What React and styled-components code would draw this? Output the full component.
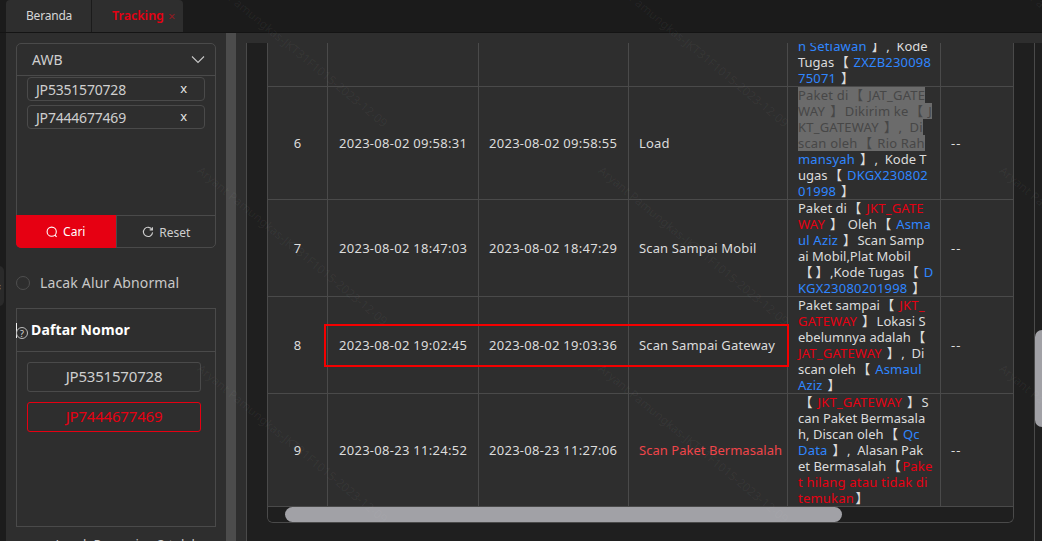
import React from "react";
import styled, { createGlobalStyle } from "styled-components";

const Global = createGlobalStyle`
  html, body { margin: 0; padding: 0; background: #1f1f1f; overflow: hidden; }
  * { box-sizing: border-box; }
  #root { height: 100vh; }
`;

const FONT = `"Noto Sans", "Noto Sans CJK SC", sans-serif`;
const LINE = "#4a4a4a";
const PANEL = "#2e2e2e";
const DARK = "#1f1f1f";
const RED = "#e60012";
const BLUE = "#2f86ff";
const TEXT = "#dcdcdc";

const Page = styled.div`
  position: relative;
  height: 100vh;
  display: flex;
  flex-direction: column;
  overflow: hidden;
  font-family: ${FONT};
  font-size: 13px;
  color: ${TEXT};
  background: ${DARK};
`;

const TabBar = styled.div`
  height: 33px;
  flex: none;
  display: flex;
  gap: 1px;
  padding-left: 6px;
  background: #1b1b1b;
  border-bottom: 1px solid #141414;
`;

const Tab = styled.div`
  width: ${(p) => p.$width}px;
  height: 32px;
  display: flex;
  align-items: center;
  padding: 0 0 1px 20px;
  gap: 5px;
  font-size: ${(p) => (p.$active ? "12.5px" : "12px")};
  letter-spacing: ${(p) => (p.$active ? "0" : "-0.2px")};
  background: ${PANEL};
  color: ${(p) => (p.$active ? RED : "#d6d6d6")};
  font-weight: ${(p) => (p.$active ? 600 : 400)};
  border-top-right-radius: ${(p) => (p.$active ? "4px" : "0")};
  border-top-left-radius: ${(p) => (p.$active ? "0" : "4px")};
`;

const TabClose = styled.span`
  margin-left: -1px;
  font-size: 13px;
  font-weight: 400;
  color: #8f1a22;
`;

const Body = styled.div`
  flex: 1;
  min-height: 0;
  display: flex;
`;

const EdgeStrip = styled.div`
  position: relative;
  width: 6px;
  flex: none;
  background: #1c1c1c;
`;

const EdgeHandle = styled.div`
  position: absolute;
  left: -2px;
  top: 233px;
  width: 6px;
  height: 40px;
  overflow: hidden;
  background: #2a2a2a;
  border-radius: 0 5px 5px 0;
  color: #888;
  font-size: 10px;
  line-height: 40px;
`;

const Sidebar = styled.aside`
  width: 220px;
  flex: none;
  padding: 10px 10px 0;
  background: ${PANEL};
  overflow: hidden;
`;

const SideScroll = styled.div`
  width: 10px;
  flex: none;
  background: #4c4c4c;
`;

const SearchBox = styled.div`
  height: 205px;
  display: flex;
  flex-direction: column;
  border: 1px solid ${LINE};
  border-radius: 5px;
`;

const SelectRow = styled.div`
  height: 32px;
  flex: none;
  display: flex;
  align-items: center;
  justify-content: space-between;
  padding: 0 10px 0 15px;
  border-bottom: 1px solid ${LINE};
  font-size: 14px;
  color: #cfcfcf;
`;

const ChipList = styled.div`
  flex: 1;
  display: flex;
  flex-direction: column;
  gap: 4px;
  padding: 1px 10px 0;
`;

const Chip = styled.div`
  width: 178px;
  height: 24px;
  display: flex;
  align-items: center;
  justify-content: space-between;
  padding: 0 17px 0 8px;
  border: 1px solid ${LINE};
  border-radius: 4px;
  font-size: 14px;
  letter-spacing: -0.2px;
  color: #cfcfcf;
`;

const ChipX = styled.span`
  font-size: 13px;
  color: #e4e4e4;
  margin-top: -3px;
`;

const ActionRow = styled.div`
  height: 33px;
  flex: none;
  display: flex;
  margin: 0 -1px -1px;
  border-top: 1px solid ${LINE};
`;

const ActionButton = styled.div`
  flex: 1;
  display: flex;
  align-items: center;
  justify-content: center;
  gap: 5px;
  font-size: 12px;
  color: ${(p) => (p.$primary ? "#fff" : "#cfcfcf")};
  background: ${(p) => (p.$primary ? RED : "transparent")};
  border-radius: ${(p) => (p.$primary ? "0 0 0 5px" : "0")};
  margin-top: ${(p) => (p.$primary ? "-1px" : "0")};
  border-left: ${(p) => (p.$primary ? "none" : `1px solid ${LINE}`)};
`;

const RadioRow = styled.div`
  display: flex;
  align-items: center;
  gap: 10px;
  height: 16px;
  margin-top: 27px;
  font-size: 14px;
  letter-spacing: 0.15px;
  color: #c8c8c8;
`;

const RadioLabel = styled.span`
  padding-bottom: 2px;
`;

const RadioDot = styled.span`
  width: 14px;
  height: 14px;
  border: 1px solid #4f4f4f;
  border-radius: 50%;
`;

const ListBox = styled.div`
  height: 219px;
  margin-top: 17px;
  border: 1px solid ${LINE};
`;

const ListHead = styled.div`
  position: relative;
  height: 43px;
  display: flex;
  align-items: center;
  padding: 0 0 2px 14px;
  font-size: 14px;
  letter-spacing: 0.15px;
  font-weight: 700;
  color: #fff;
  border-bottom: 1px solid ${LINE};
`;

const HelpBadge = styled.span`
  position: absolute;
  left: -1px;
  top: 18px;
  width: 12px;
  height: 12px;
  display: flex;
  align-items: center;
  justify-content: center;
  border: 1px solid #bbb;
  border-radius: 50%;
  font-size: 9px;
  font-weight: 400;
  color: #ddd;
`;

const HelpBar = styled.span`
  position: absolute;
  left: -1px;
  top: 14px;
  width: 1px;
  height: 15px;
  background: #f0f0f0;
`;

const ListBody = styled.div`
  display: flex;
  flex-direction: column;
  gap: 10px;
  padding: 10px 14px 0 10px;
`;

const NumberButton = styled.div`
  height: 30px;
  display: flex;
  align-items: center;
  justify-content: center;
  padding-bottom: 2px;
  font-size: 15px;
  letter-spacing: -0.2px;
  border-radius: 3px;
  color: ${(p) => (p.$active ? RED : "#cfcfcf")};
  border: 1px solid ${(p) => (p.$active ? RED : LINE)};
`;

const FootText = styled.div`
  margin-top: 8px;
  text-align: center;
  padding-left: 22px;
  font-size: 13px;
  color: #c8c8c8;
  white-space: nowrap;
`;

const Main = styled.main`
  flex: 1;
  min-width: 0;
  display: flex;
  padding-top: 10px;
  background: ${PANEL};
`;

const Content = styled.section`
  margin-left: 10px;
  width: 789px;
  flex: none;
  padding-left: 20px;
  background: ${DARK};
  border-left: 1px solid ${LINE};
  border-right: 1px solid ${LINE};
`;

const Card = styled.div`
  width: 747px;
  height: 480px;
  display: flex;
  flex-direction: column;
  overflow: hidden;
  border-left: 1px solid ${LINE};
  border-right: 1px solid ${LINE};
  border-bottom: 1px solid ${LINE};
  border-radius: 0 0 6px 6px;
  background: ${DARK};
`;

const TableClip = styled.div`
  flex: none;
  height: 464px;
  overflow: hidden;
`;

const Table = styled.table`
  width: 745px;
  margin-top: -5px;
  table-layout: fixed;
  border-collapse: separate;
  border-spacing: 0;
  background: ${PANEL};
`;

const Cell = styled.td`
  padding: 0 0 0 ${(p) => p.$pad ?? 10}px;
  text-align: ${(p) => (p.$center ? "center" : "left")};
  vertical-align: middle;
  line-height: 16px;
  white-space: nowrap;
  overflow: hidden;
  letter-spacing: ${(p) => p.$spacing ?? 0}px;
  color: ${(p) => (p.$alert ? "#f0454a" : TEXT)};
  border-bottom: 1px solid ${LINE};
  border-right: ${(p) => (p.$last ? "none" : `1px solid ${LINE}`)};
`;

const LogLine = styled.div`
  height: 16px;
  white-space: pre;
`;

const Piece = styled.span`
  color: ${(p) =>
    p.$tone === "b" ? BLUE : p.$tone === "r" ? RED : p.$tone === "s" ? "#474747" : TEXT};
  background: ${(p) => (p.$tone === "s" ? "#6b6b6b" : "transparent")};
  display: ${(p) => (p.$tone === "s" ? "inline-block" : "inline")};
  height: ${(p) => (p.$tone === "s" ? "16px" : "auto")};
  letter-spacing: ${(p) => (p.$tone ? "0.2px" : "0")};
`;

const Bracket = styled.span`
  margin: 0 1.5px;
`;

const HTrack = styled.div`
  flex: none;
  height: 15px;
  padding-left: 17px;
  background: ${DARK};
`;

const HThumb = styled.div`
  width: 557px;
  height: 15px;
  background: #a1a1a6;
  border-radius: 8px;
`;

const VTrack = styled.div`
  flex: 1;
  padding-top: 287px;
  background: ${DARK};
`;

const VThumb = styled.div`
  height: 97px;
  background: #a1a1a6;
  border-radius: 7px 0 0 7px;
`;

const Highlight = styled.div`
  position: absolute;
  left: 324px;
  top: 324px;
  width: 465px;
  height: 43px;
  border: 2px solid #f40000;
  pointer-events: none;
`;

const Watermarks = styled.div`
  position: absolute;
  inset: 0;
  overflow: hidden;
  pointer-events: none;
`;

const Mark = styled.span`
  position: absolute;
  font-size: 12px;
  line-height: 14px;
  white-space: nowrap;
  color: rgba(255, 255, 255, 0.05);
  transform-origin: 0 50%;
  transform: rotate(39.5deg);
`;

const Glyph = styled.svg`
  display: block;
  flex: none;
`;

const Chevron = () => (
  <Glyph width="14" height="9" viewBox="0 0 14 9" fill="none" stroke="#c8c8c8" strokeWidth="1.1">
    <path d="M1 1.5 7 7.5 13 1.5" />
  </Glyph>
);

const SearchGlyph = () => (
  <Glyph width="12" height="12" viewBox="0 0 12 12" fill="none" stroke="#fff" strokeWidth="1.1">
    <circle cx="5.7" cy="5.7" r="4.6" />
    <path d="M8.8 9 10.6 10.9" />
  </Glyph>
);

const ResetGlyph = () => (
  <Glyph width="12" height="12" viewBox="0 0 12 12" fill="none" stroke="#cfcfcf" strokeWidth="1.1">
    <path d="M10 3.6A4.6 4.6 0 1 0 10.6 6.4" />
    <path d="M10.4 1.2V3.9H7.7" />
  </Glyph>
);

const b = (t) => ["b", t];
const r = (t) => ["r", t];
const s = (t) => ["s", t];

const ROWS = [
  {
    no: "",
    a: "",
    c: "",
    action: "",
    log: [
      [b("n Setiawan"), " 】,  Kode"],
      ["Tugas【 ", b("ZXZB230098")],
      [b("75071"), " 】"],
    ],
  },
  {
    no: "6",
    a: "2023-08-02 09:58:31",
    c: "2023-08-02 09:58:55",
    action: "Load",
    log: [
      [s("Paket di【 JAT_GATE")],
      [s("WAY 】Dikirim ke【 J")],
      [s("KT_GATEWAY 】,  Di")],
      [s("scan oleh【 Rio Rah")],
      [b("mansyah"), " 】,  Kode T"],
      ["ugas【 ", b("DKGX230802")],
      [b("01998"), " 】"],
    ],
  },
  {
    no: "7",
    a: "2023-08-02 18:47:03",
    c: "2023-08-02 18:47:29",
    action: "Scan Sampai Mobil",
    log: [
      ["Paket di【 ", r("JKT_GATE")],
      [r("WAY"), " 】 Oleh【 ", b("Asma")],
      [b("ul Aziz"), " 】Scan Samp"],
      ["ai Mobil,Plat Mobil"],
      ["【】,Kode Tugas【 ", b("D")],
      [b("KGX23080201998"), " 】"],
    ],
  },
  {
    no: "8",
    a: "2023-08-02 19:02:45",
    c: "2023-08-02 19:03:36",
    action: "Scan Sampai Gateway",
    log: [
      ["Paket sampai【 ", r("JKT_")],
      [r("GATEWAY"), " 】Lokasi S"],
      ["ebelumnya adalah【"],
      [r("JAT_GATEWAY"), " 】,  Di"],
      ["scan oleh【 ", b("Asmaul")],
      [b("Aziz"), " 】"],
    ],
  },
  {
    no: "9",
    a: "2023-08-23 11:24:52",
    c: "2023-08-23 11:27:06",
    action: "Scan Paket Bermasalah",
    alert: true,
    log: [
      ["【 ", r("JKT_GATEWAY"), " 】S"],
      ["can Paket Bermasala"],
      ["h, Discan oleh【 ", b("Qc")],
      [b("Data"), " 】,  Alasan Pak"],
      ["et Bermasalah【", r("Pake")],
      [r("t hilang atau tidak di")],
      [r("temukan"), "】"],
    ],
  },
];

const COLS = [60, 151, 150, 159, 153, 72];
const MARK_TEXT = "Aryant Pamungkas-JKT31F1015-2023-12-09";
const MARKS = [-36, 162, 360, 558].flatMap((y) =>
  [-202, 199, 600, 1001].map((x) => ({ x, y }))
);

const withBrackets = (text) =>
  text
    .split(/([【】])/)
    .map((chunk, i) =>
      chunk === "【" || chunk === "】" ? <Bracket key={i}>{chunk}</Bracket> : chunk
    );

export default function App() {
  return (
    <Page>
      <Global />
      <TabBar>
        <Tab $width={85}>Beranda</Tab>
        <Tab $width={91} $active>
          Tracking <TabClose>×</TabClose>
        </Tab>
      </TabBar>
      <Body>
        <EdgeStrip>
          <EdgeHandle>‹</EdgeHandle>
        </EdgeStrip>
        <Sidebar>
          <SearchBox>
            <SelectRow>
              AWB
              <Chevron />
            </SelectRow>
            <ChipList>
              <Chip>
                JP5351570728<ChipX>x</ChipX>
              </Chip>
              <Chip>
                JP7444677469<ChipX>x</ChipX>
              </Chip>
            </ChipList>
            <ActionRow>
              <ActionButton $primary>
                <SearchGlyph />
                Cari
              </ActionButton>
              <ActionButton>
                <ResetGlyph />
                Reset
              </ActionButton>
            </ActionRow>
          </SearchBox>
          <RadioRow>
            <RadioDot />
            <RadioLabel>Lacak Alur Abnormal</RadioLabel>
          </RadioRow>
          <ListBox>
            <ListHead>
              <HelpBar />
              <HelpBadge>?</HelpBadge>
              Daftar Nomor
            </ListHead>
            <ListBody>
              <NumberButton>JP5351570728</NumberButton>
              <NumberButton $active>JP7444677469</NumberButton>
            </ListBody>
          </ListBox>
          <FootText>Lacak Pencarian 3 tolak</FootText>
        </Sidebar>
        <SideScroll />
        <Main>
          <Content>
            <Card>
              <TableClip>
                <Table>
                  <colgroup>
                    {COLS.map((w, i) => (
                      <col key={i} width={w} />
                    ))}
                  </colgroup>
                  <tbody>
                    {ROWS.map((row, i) => (
                      <tr key={i}>
                        <Cell $center $pad={0}>{row.no}</Cell>
                        <Cell $pad={11} $spacing={0.28}>{row.a}</Cell>
                        <Cell $spacing={0.28}>{row.c}</Cell>
                        <Cell $spacing={row.alert ? 0.03 : 0.14} $alert={row.alert}>{row.action}</Cell>
                        <Cell>
                          {row.log.map((line, j) => (
                            <LogLine key={j}>
                              {line.map((part, k) =>
                                typeof part === "string" ? (
                                  <Piece key={k}>{withBrackets(part)}</Piece>
                                ) : (
                                  <Piece key={k} $tone={part[0]}>{withBrackets(part[1])}</Piece>
                                )
                              )}
                            </LogLine>
                          ))}
                        </Cell>
                        <Cell $last $spacing={1}>{i === 0 ? "" : "--"}</Cell>
                      </tr>
                    ))}
                  </tbody>
                </Table>
              </TableClip>
              <HTrack>
                <HThumb />
              </HTrack>
            </Card>
          </Content>
          <VTrack>
            <VThumb />
          </VTrack>
        </Main>
      </Body>
      <Highlight />
      <Watermarks>
        {MARKS.map((m, i) => (
          <Mark key={i} style={{ left: m.x, top: m.y }}>
            {MARK_TEXT}
          </Mark>
        ))}
      </Watermarks>
    </Page>
  );
}
